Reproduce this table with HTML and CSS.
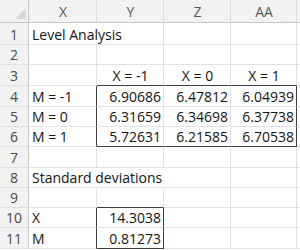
FILE: index.html
```html
<!DOCTYPE html>
<html>
<head>
<meta charset="utf-8">
<link rel="stylesheet" href="styles.css">
</head>
<body>
<div class="sheet">
  <div class="corner"><svg class="tri" width="11" height="11" viewBox="0 0 11 11"><polygon points="11,0 11,11 0,11" fill="#d9d9d9"/></svg></div>
  <div class="ch">X</div><div class="ch">Y</div><div class="ch">Z</div><div class="ch">AA</div><div class="ch"></div>

  <div class="rh">1</div><div class="c ov">Level Analysis</div><div class="c"></div><div class="c"></div><div class="c"></div><div class="c"></div>
  <div class="rh">2</div><div class="c"></div><div class="c"></div><div class="c"></div><div class="c"></div><div class="c"></div>
  <div class="rh">3</div><div class="c"></div><div class="c ctr bb">X = -1</div><div class="c ctr bb">X = 0</div><div class="c ctr bb">X = 1</div><div class="c"></div>
  <div class="rh">4</div><div class="c br">M = -1</div><div class="c num">6.90686</div><div class="c num">6.47812</div><div class="c num br">6.04939</div><div class="c"></div>
  <div class="rh">5</div><div class="c br">M = 0</div><div class="c num">6.31659</div><div class="c num">6.34698</div><div class="c num br">6.37738</div><div class="c"></div>
  <div class="rh">6</div><div class="c br">M = 1</div><div class="c num bb">5.72631</div><div class="c num bb">6.21585</div><div class="c num br bb">6.70538</div><div class="c"></div>
  <div class="rh">7</div><div class="c"></div><div class="c"></div><div class="c"></div><div class="c"></div><div class="c"></div>
  <div class="rh">8</div><div class="c ov">Standard deviations</div><div class="c ov"></div><div class="c"></div><div class="c"></div><div class="c"></div>
  <div class="rh">9</div><div class="c"></div><div class="c bb"></div><div class="c"></div><div class="c"></div><div class="c"></div>
  <div class="rh">10</div><div class="c br">X</div><div class="c num br">14.3038</div><div class="c"></div><div class="c"></div><div class="c"></div>
  <div class="rh">11</div><div class="c br">M</div><div class="c num br bb">0.81273</div><div class="c"></div><div class="c"></div><div class="c"></div>
</div>
</body>
</html>
```
FILE: styles.css
```css
html, body {
  margin: 0;
  padding: 0;
  background: #ffffff;
}
.sheet {
  display: grid;
  grid-template-columns: 29px 68px 67px 67px 66px 1fr;
  grid-template-rows: 23px 22px 20px 21px 21px 20px 20px 21px 20px 20px 20px 21px;
  width: 300px;
  height: 250px;
  overflow: hidden;
  font-family: "Open Sans", Lato, "Liberation Sans", sans-serif;
  font-size: 14px;
  line-height: 17px;
  color: #141414;
}
.sheet > div {
  box-sizing: border-box;
  min-width: 0;
  display: flex;
  align-items: flex-end;
  padding: 0 2px 1px 3px;
  white-space: nowrap;
}
.corner {
  background: #f2f2f2;
  border-right: 1px solid #c6c6c6;
  border-bottom: 1px solid #c6c6c6;
  position: relative;
}
.tri {
  position: absolute;
  right: 2px;
  bottom: 3px;
}
.ch {
  background: #f2f2f2;
  color: #5a5a5a;
  justify-content: center;
  border-right: 1px solid #dcdcdc;
  border-bottom: 1px solid #c6c6c6;
  padding-bottom: 2px !important;
}
.rh {
  background: #f2f2f2;
  color: #4a4a4a;
  justify-content: center;
  border-right: 1px solid #c6c6c6;
  border-bottom: 1px solid #e0e0e0;
  padding: 0 0 1px 0 !important;
}
.c {
  border-right: 1px solid #e1e1e1;
  border-bottom: 1px solid #e1e1e1;
  overflow: visible;
}
.ov {
  border-right-color: #ffffff !important;
}
.ctr {
  justify-content: center;
}
.num {
  justify-content: flex-end;
}
.br {
  border-right-color: #3f3f3f;
}
.bb {
  border-bottom-color: #3f3f3f;
}
```
